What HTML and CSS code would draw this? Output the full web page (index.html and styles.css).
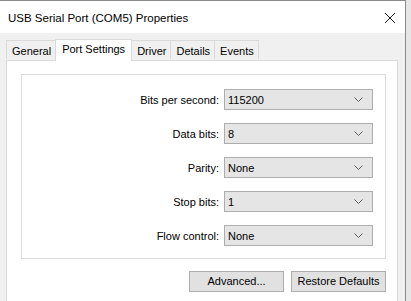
FILE: index.html
```html
<!DOCTYPE html>
<html>
<head>
<meta charset="utf-8">
<link rel="stylesheet" href="styles.css">
</head>
<body>
<div class="window">
  <div class="titlebar">
    <span class="title">USB Serial Port (COM5) Properties</span>
    <svg class="close" width="12" height="12" viewBox="0 0 12 12"><path d="M1 1 L11 11 M11 1 L1 11" stroke="#1a1a1a" stroke-width="1" fill="none"/></svg>
  </div>
  <div class="client">
    <div class="tabs">
      <div class="tab">General</div>
      <div class="tab active">Port Settings</div>
      <div class="tab">Driver</div>
      <div class="tab">Details</div>
      <div class="tab">Events</div>
    </div>
    <div class="panel">
      <div class="frame">
        <div class="row"><span class="label">Bits per second:</span><div class="combo"><span>115200</span><svg class="chev" width="9" height="5" viewBox="0 0 9 5"><path d="M0.5 0.5 L4.5 4.5 L8.5 0.5" stroke="#606060" fill="none"/></svg></div></div>
        <div class="row"><span class="label">Data bits:</span><div class="combo"><span>8</span><svg class="chev" width="9" height="5" viewBox="0 0 9 5"><path d="M0.5 0.5 L4.5 4.5 L8.5 0.5" stroke="#606060" fill="none"/></svg></div></div>
        <div class="row"><span class="label">Parity:</span><div class="combo"><span>None</span><svg class="chev" width="9" height="5" viewBox="0 0 9 5"><path d="M0.5 0.5 L4.5 4.5 L8.5 0.5" stroke="#606060" fill="none"/></svg></div></div>
        <div class="row"><span class="label">Stop bits:</span><div class="combo"><span>1</span><svg class="chev" width="9" height="5" viewBox="0 0 9 5"><path d="M0.5 0.5 L4.5 4.5 L8.5 0.5" stroke="#606060" fill="none"/></svg></div></div>
        <div class="row"><span class="label">Flow control:</span><div class="combo"><span>None</span><svg class="chev" width="9" height="5" viewBox="0 0 9 5"><path d="M0.5 0.5 L4.5 4.5 L8.5 0.5" stroke="#606060" fill="none"/></svg></div></div>
      </div>
      <div class="buttons">
        <div class="btn">Advanced...</div>
        <div class="btn">Restore Defaults</div>
      </div>
    </div>
  </div>
</div>
</body>
</html>
```
FILE: styles.css
```css
html, body {
  margin: 0;
  padding: 0;
}
body {
  width: 411px;
  height: 301px;
  overflow: hidden;
  background: #e6e6e6;
  font-family: "Liberation Sans", Arial, sans-serif;
  font-size: 11px;
  color: #000;
}
.window {
  width: 406px;
  height: 301px;
  border-top: 1px solid #8a8a8a;
  border-right: 1px solid #8a8a8a;
  background: #f0f0f0;
  box-sizing: border-box;
  display: flex;
  flex-direction: column;
}
.titlebar {
  height: 32px;
  background: #fff;
  display: flex;
  align-items: center;
  justify-content: space-between;
  padding: 0 9px 0 8px;
  flex-shrink: 0;
}
.title {
  font-size: 11.5px;
  padding-top: 1px;
}
.close {
  display: block;
  margin-top: 1px;
}
.client {
  padding: 6px 6px 0 6px;
  display: flex;
  flex-direction: column;
  flex: 1;
}
.tabs {
  display: flex;
  align-items: flex-end;
  height: 21px;
  position: relative;
  z-index: 1;
}
.tab {
  height: 19px;
  box-sizing: border-box;
  border: 1px solid #d9d9d9;
  border-bottom: none;
  border-right: none;
  background: #f0f0f0;
  padding: 1px 4px 0 5px;
  line-height: 19px;
  margin-bottom: 1px;
}
.tab.active {
  height: 22px;
  background: #fff;
  border-right: 1px solid #d9d9d9;
  margin-bottom: -1px;
  padding: 0 6px;
  line-height: 18px;
}
.tab.active + .tab {
  border-left: none;
}
.tab:last-child {
  border-right: 1px solid #d9d9d9;
}
.panel {
  width: 392px;
  flex: 1;
  box-sizing: border-box;
  background: #fff;
  border: 1px solid #d9d9d9;
  border-bottom: none;
  padding: 13px 0 0 14px;
}
.frame {
  width: 365px;
  box-sizing: border-box;
  border: 1px solid #dcdcdc;
  padding: 14px 12px 12px 0;
  display: flex;
  flex-direction: column;
  gap: 13px;
}
.row {
  display: flex;
  align-items: center;
  justify-content: flex-end;
  gap: 5px;
}
.label {
  text-align: right;
}
.combo {
  width: 149px;
  height: 21px;
  box-sizing: border-box;
  background: #e5e5e5;
  border: 1px solid #adadad;
  display: flex;
  align-items: center;
  justify-content: space-between;
  padding: 0 9px 0 3px;
}
.chev {
  display: block;
}
.buttons {
  width: 365px;
  display: flex;
  justify-content: flex-end;
  gap: 7px;
  margin-top: 12px;
}
.btn {
  width: 95px;
  height: 21px;
  box-sizing: border-box;
  background: #e1e1e1;
  border: 1px solid #adadad;
  text-align: center;
  line-height: 19px;
}
```
